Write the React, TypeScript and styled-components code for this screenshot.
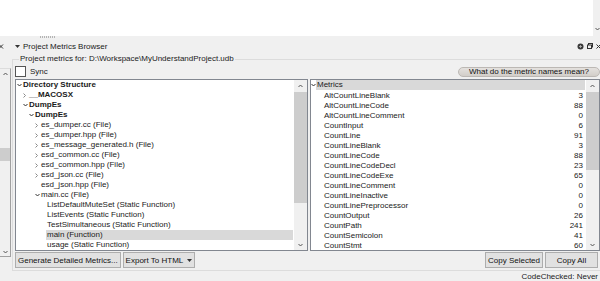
import React from "react";
import styled, { createGlobalStyle } from "styled-components";

const GlobalStyle = createGlobalStyle`
  html, body { margin: 0; padding: 0; }
  body {
    background: #f0f0f0;
    font-family: "Liberation Sans", Arial, sans-serif;
    font-size: 8px;
    color: #000;
    overflow: hidden;
  }
  * { box-sizing: border-box; }
`;

type Dir = "up" | "down" | "right";

const Chevron = ({ dir, color = "#606060" }: { dir: Dir; color?: string }) => {
  if (dir === "right") {
    return (
      <svg width={4} height={5} viewBox="0 0 4 5">
        <polyline points="0.5,0.5 2.5,2.5 0.5,4.5" fill="none" stroke={color} strokeWidth="1" />
      </svg>
    );
  }
  const pts = dir === "up" ? "0.5,3 2.5,1 4.5,3" : "0.5,1 2.5,3 4.5,1";
  return (
    <svg width={5} height={4} viewBox="0 0 5 4">
      <polyline points={pts} fill="none" stroke={color} strokeWidth="1" />
    </svg>
  );
};

const tree: { label: string; level: number; exp?: Dir; bold?: boolean; selected?: boolean }[] = [
  { label: "Directory Structure", level: 0, exp: "down", bold: true },
  { label: "__MACOSX", level: 1, exp: "right", bold: true },
  { label: "DumpEs", level: 1, exp: "down", bold: true },
  { label: "DumpEs", level: 2, exp: "down", bold: true },
  { label: "es_dumper.cc (File)", level: 3, exp: "right" },
  { label: "es_dumper.hpp (File)", level: 3, exp: "right" },
  { label: "es_message_generated.h (File)", level: 3, exp: "right" },
  { label: "esd_common.cc (File)", level: 3, exp: "right" },
  { label: "esd_common.hpp (File)", level: 3, exp: "right" },
  { label: "esd_json.cc (File)", level: 3, exp: "right" },
  { label: "esd_json.hpp (File)", level: 3 },
  { label: "main.cc (File)", level: 3, exp: "down" },
  { label: "ListDefaultMuteSet (Static Function)", level: 4 },
  { label: "ListEvents (Static Function)", level: 4 },
  { label: "TestSimultaneous (Static Function)", level: 4 },
  { label: "main (Function)", level: 4, selected: true },
  { label: "usage (Static Function)", level: 4 },
];

const metrics: [string, string][] = [
  ["AltCountLineBlank", "3"],
  ["AltCountLineCode", "88"],
  ["AltCountLineComment", "0"],
  ["CountInput", "6"],
  ["CountLine", "91"],
  ["CountLineBlank", "3"],
  ["CountLineCode", "88"],
  ["CountLineCodeDecl", "23"],
  ["CountLineCodeExe", "65"],
  ["CountLineComment", "0"],
  ["CountLineInactive", "0"],
  ["CountLinePreprocessor", "0"],
  ["CountOutput", "26"],
  ["CountPath", "241"],
  ["CountSemicolon", "41"],
  ["CountStmt", "60"],
];

const App = () => {
  return (
    <Window>
      <GlobalStyle />
      <TopPane>
        <TopContent />
        <TopScroll>
          <Chevron dir="down" color="#555" />
        </TopScroll>
      </TopPane>

      <Dock>
        <Grip />
        <TitleRow>
          <CloseCut>
            <svg width={4} height={5} viewBox="0 0 4 5">
              <path d="M-1 0.5 L3 4.5 M3 0.5 L-1 4.5" stroke="#333" strokeWidth="1" />
            </svg>
          </CloseCut>
          <DockArrow>
            <svg width={5} height={3} viewBox="0 0 5 3">
              <polygon points="0,0 5,0 2.5,3" fill="#333" />
            </svg>
          </DockArrow>
          <Title>Project Metrics Browser</Title>
          <TitleIcons>
            <svg width={7} height={7} viewBox="0 0 7 7">
              <circle cx="3.5" cy="3.5" r="3" fill="#3a3a3a" />
              <path d="M2 3.5 H5 M3.5 2 V5" stroke="#bbb" strokeWidth="0.8" />
            </svg>
            <svg width={6} height={6} viewBox="0 0 6 6">
              <rect x="1.5" y="0.5" width="4" height="3.5" fill="none" stroke="#333" />
              <rect x="0.5" y="2" width="4" height="3.5" fill="#f0f0f0" stroke="#333" />
            </svg>
            <svg width={5} height={5} viewBox="0 0 5 5">
              <path d="M0.5 0.5 L4.5 4.5 M4.5 0.5 L0.5 4.5" stroke="#333" strokeWidth="1" />
            </svg>
          </TitleIcons>
        </TitleRow>
      </Dock>

      <Body>
        <SideStrip>
          <SideBox>
            <SideScroll>
              <ScrollArrow>
                <Chevron dir="up" color="#555" />
              </ScrollArrow>
              <SideTrack>
                <SideThumb />
              </SideTrack>
              <ScrollArrow>
                <Chevron dir="down" color="#555" />
              </ScrollArrow>
            </SideScroll>
          </SideBox>
        </SideStrip>

        <Main>
          <Group>
            <Legend>Project metrics for: D:\Workspace\MyUnderstandProject.udb</Legend>
            <SyncRow>
              <CheckLabel>
                <CheckBox />
                Sync
              </CheckLabel>
              <Pill>What do the metric names mean?</Pill>
            </SyncRow>

            <Panes>
              <Pane $width={293}>
                <List>
                  {tree.map((row, i) => (
                    <TreeRow key={i} $level={row.level}>
                      <Twisty>
                        {row.exp && (
                          <Chevron dir={row.exp} color={row.exp === "right" ? "#8a8a8a" : "#333"} />
                        )}
                      </Twisty>
                      <Label $bold={row.bold} $selected={row.selected}>
                        {row.label}
                      </Label>
                    </TreeRow>
                  ))}
                </List>
                <VScroll>
                  <ScrollArrow $h={11}>
                    <Chevron dir="up" color="#555" />
                  </ScrollArrow>
                  <Track>
                    <Thumb $h={111} />
                  </Track>
                  <ScrollArrow $h={11}>
                    <Chevron dir="down" color="#555" />
                  </ScrollArrow>
                </VScroll>
              </Pane>

              <Pane $width={290}>
                <List>
                  <HeaderRow>
                    <Twisty>
                      <Chevron dir="down" color="#333" />
                    </Twisty>
                    <Label $selected>Metrics</Label>
                  </HeaderRow>
                  {metrics.map(([name, value]) => (
                    <MetricRow key={name}>
                      <span>{name}</span>
                      <span>{value}</span>
                    </MetricRow>
                  ))}
                </List>
                <VScroll>
                  <ScrollArrow $h={11}>
                    <Chevron dir="up" color="#555" />
                  </ScrollArrow>
                  <Track>
                    <Thumb $h={78} />
                  </Track>
                  <ScrollArrow $h={11}>
                    <Chevron dir="down" color="#555" />
                  </ScrollArrow>
                </VScroll>
              </Pane>
            </Panes>

            <ButtonRow>
              <ButtonGroup>
                <Button>Generate Detailed Metrics...</Button>
                <Button>
                  Export To HTML
                  <Caret>
                    <svg width={5} height={3} viewBox="0 0 5 3">
                      <polygon points="0,0 5,0 2.5,3" fill="#333" />
                    </svg>
                  </Caret>
                </Button>
              </ButtonGroup>
              <ButtonGroup>
                <Button $width={58}>Copy Selected</Button>
                <Button $width={53}>Copy All</Button>
              </ButtonGroup>
            </ButtonRow>
          </Group>
          <Status>CodeChecked: Never</Status>
        </Main>
      </Body>
    </Window>
  );
};

export default App;

const Window = styled.div`
  width: 600px;
  height: 281px;
  display: flex;
  flex-direction: column;
  overflow: hidden;
`;

const TopPane = styled.div`
  height: 36px;
  flex: none;
  display: flex;
  background: #fff;
`;

const TopContent = styled.div`
  flex: 1;
`;

const TopScroll = styled.div`
  width: 7px;
  background: #f0f0f0;
  display: flex;
  flex-direction: column;
  justify-content: flex-end;
  align-items: flex-end;
  padding-bottom: 5px;
`;

const Dock = styled.div`
  flex: none;
  display: flex;
  flex-direction: column;
  height: 18px;
`;

const Grip = styled.div`
  margin-left: 40px;
  width: 15px;
  height: 2px;
  background: repeating-linear-gradient(90deg, #b4b4b4 0 1px, transparent 1px 2px);
`;

const TitleRow = styled.div`
  display: flex;
  align-items: center;
  height: 16px;
`;

const CloseCut = styled.div`
  width: 4px;
  display: flex;
  align-items: center;
`;

const DockArrow = styled.div`
  margin-left: 11px;
  width: 8px;
  display: flex;
  align-items: center;
`;

const Title = styled.div`
  flex: 1;
  color: #1a1a1a;
  white-space: nowrap;
`;

const TitleIcons = styled.div`
  display: flex;
  align-items: center;
  gap: 3px;
  margin-right: -1px;
`;

const Body = styled.div`
  flex: 1;
  display: flex;
  min-height: 0;
`;

const SideStrip = styled.div`
  width: 12px;
  flex: none;
  padding-top: 14px;
`;

const SideBox = styled.div`
  height: 189px;
  width: 11px;
  border-top: 1px solid #dcdcdc;
  border-right: 1px solid #a0a0a0;
  border-bottom: 1px solid #a0a0a0;
  background: #fff;
  display: flex;
`;

const SideScroll = styled.div`
  width: 10px;
  background: #f0f0f0;
  display: flex;
  flex-direction: column;
`;

const SideTrack = styled.div`
  flex: 1;
  padding-top: 70px;
`;

const SideThumb = styled.div`
  height: 13px;
  background: #cdcdcd;
`;

const Main = styled.div`
  flex: 1;
  min-width: 0;
  display: flex;
  flex-direction: column;
`;

const Group = styled.fieldset`
  margin: 0;
  padding: 0 0 1px 2px;
  border: 1px solid #dcdcdc;
  border-right: none;
  min-width: 0;
`;

const Legend = styled.legend`
  margin-left: 4px;
  padding: 0 1px;
  font-size: 8px;
  line-height: 10px;
  color: #1a1a1a;
  white-space: nowrap;
`;

const SyncRow = styled.div`
  height: 15px;
  display: flex;
  align-items: center;
  justify-content: space-between;
`;

const CheckLabel = styled.label`
  display: flex;
  align-items: center;
  gap: 4px;
  color: #1a1a1a;
`;

const CheckBox = styled.span`
  width: 11px;
  height: 11px;
  background: #fff;
  border: 1px solid #555;
`;

const Pill = styled.div`
  height: 10px;
  padding: 0 10px;
  border-radius: 5px;
  border: 1px solid #bcb8b4;
  background: linear-gradient(#e4e1de, #d2cec9);
  display: flex;
  align-items: center;
  white-space: nowrap;
  color: #111;
`;

const Panes = styled.div`
  display: flex;
  gap: 2px;
  height: 172px;
`;

const Pane = styled.div<{ $width: number }>`
  width: ${(p) => p.$width}px;
  flex: none;
  border: 1px solid #828790;
  background: #fff;
  display: flex;
  overflow: hidden;
`;

const List = styled.div`
  flex: 1;
  min-width: 0;
  overflow: hidden;
`;

const TreeRow = styled.div<{ $level: number }>`
  height: 10px;
  display: flex;
  align-items: center;
  padding-left: ${(p) => 1 + p.$level * 6}px;
  white-space: nowrap;
`;

const Twisty = styled.span`
  width: 5px;
  flex: none;
  display: flex;
  align-items: center;
`;

const Label = styled.span<{ $bold?: boolean; $selected?: boolean }>`
  flex: 1;
  height: 10px;
  line-height: 10px;
  padding-left: 1px;
  margin-right: 1px;
  font-weight: ${(p) => (p.$bold ? "bold" : "normal")};
  background: ${(p) => (p.$selected ? "#d9d9d9" : "transparent")};
  color: #1a1a1a;
`;

const HeaderRow = styled.div`
  height: 10px;
  display: flex;
  align-items: center;
`;

const MetricRow = styled.div`
  height: 10px;
  display: flex;
  align-items: center;
  justify-content: space-between;
  padding: 0 3px 0 13px;
  color: #1a1a1a;
`;

const VScroll = styled.div`
  width: 13px;
  flex: none;
  background: #f0f0f0;
  display: flex;
  flex-direction: column;
`;

const ScrollArrow = styled.div<{ $h?: number }>`
  height: ${(p) => p.$h ?? 9}px;
  flex: none;
  display: flex;
  align-items: center;
  justify-content: center;
`;

const Track = styled.div`
  flex: 1;
  padding-top: 1px;
`;

const Thumb = styled.div<{ $h: number }>`
  height: ${(p) => p.$h}px;
  background: #cdcdcd;
`;

const ButtonRow = styled.div`
  display: flex;
  justify-content: space-between;
  padding: 1px 2px 1px 0;
`;

const ButtonGroup = styled.div`
  display: flex;
  gap: 2px;
`;

const Button = styled.button<{ $width?: number }>`
  height: 16px;
  ${(p) => (p.$width ? `width: ${p.$width}px;` : "")}
  padding: 0 2px;
  border: 1px solid #adadad;
  background: #e1e1e1;
  font-family: inherit;
  font-size: 8px;
  color: #111;
  display: flex;
  align-items: center;
  justify-content: center;
  white-space: nowrap;
`;

const Caret = styled.span`
  margin-left: 4px;
  display: flex;
  align-items: center;
`;

const Status = styled.div`
  flex: 1;
  display: flex;
  align-items: center;
  justify-content: flex-end;
  padding-right: 2px;
  color: #1a1a1a;
`;
